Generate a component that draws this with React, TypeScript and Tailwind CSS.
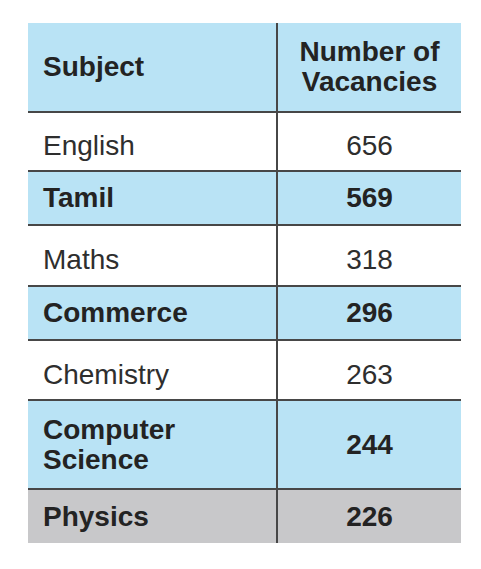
type Row = {
  subject: string[];
  count: string;
  tone: "blue" | "white" | "gray";
  height: string;
};

const rows: Row[] = [
  { subject: ["English"], count: "656", tone: "white", height: "h-[59px]" },
  { subject: ["Tamil"], count: "569", tone: "blue", height: "h-[54px]" },
  { subject: ["Maths"], count: "318", tone: "white", height: "h-[61px]" },
  { subject: ["Commerce"], count: "296", tone: "blue", height: "h-[54px]" },
  { subject: ["Chemistry"], count: "263", tone: "white", height: "h-[60px]" },
  { subject: ["Computer", "Science"], count: "244", tone: "blue", height: "h-[89px]" },
  { subject: ["Physics"], count: "226", tone: "gray", height: "h-[53px]" },
];

const toneClass = {
  blue: "bg-[#b9e3f5] font-bold text-[#232323]",
  white: "bg-white font-normal text-[#2e2e2e]",
  gray: "bg-[#c8c8ca] font-bold text-[#232323]",
};

const App = () => {
  return (
    <div
      className="w-[481px] h-[569px] bg-white pt-[23px] pl-[28px]"
      style={{ fontFamily: '"Liberation Sans", Arial, sans-serif' }}
    >
      <div className="w-[433px] flex flex-col text-[28px] leading-[30px]">
        {/* header */}
        <div className="flex h-[90px] bg-[#b9e3f5] border-b-2 border-[#474747] font-bold text-[#232323]">
          <div className="w-[250px] flex items-center pl-[15px] border-r-2 border-[#474747]">
            Subject
          </div>
          <div className="flex-1 flex flex-col items-center justify-center">
            <span>Number of</span>
            <span>Vacancies</span>
          </div>
        </div>

        {rows.map((row, i) => {
          const pad = row.tone === "white" ? "pt-[9px]" : "";
          return (
            <div
              key={row.count}
              className={`flex ${row.height} ${toneClass[row.tone]} ${
                i < rows.length - 1 ? "border-b-2 border-[#474747]" : ""
              }`}
            >
              <div
                className={`w-[250px] flex flex-col justify-center pl-[15px] border-r-2 border-[#474747] ${pad}`}
              >
                {row.subject.map((s) => (
                  <span key={s}>{s}</span>
                ))}
              </div>
              <div className={`flex-1 flex items-center justify-center ${pad}`}>{row.count}</div>
            </div>
          );
        })}
      </div>
    </div>
  );
};

export default App;
